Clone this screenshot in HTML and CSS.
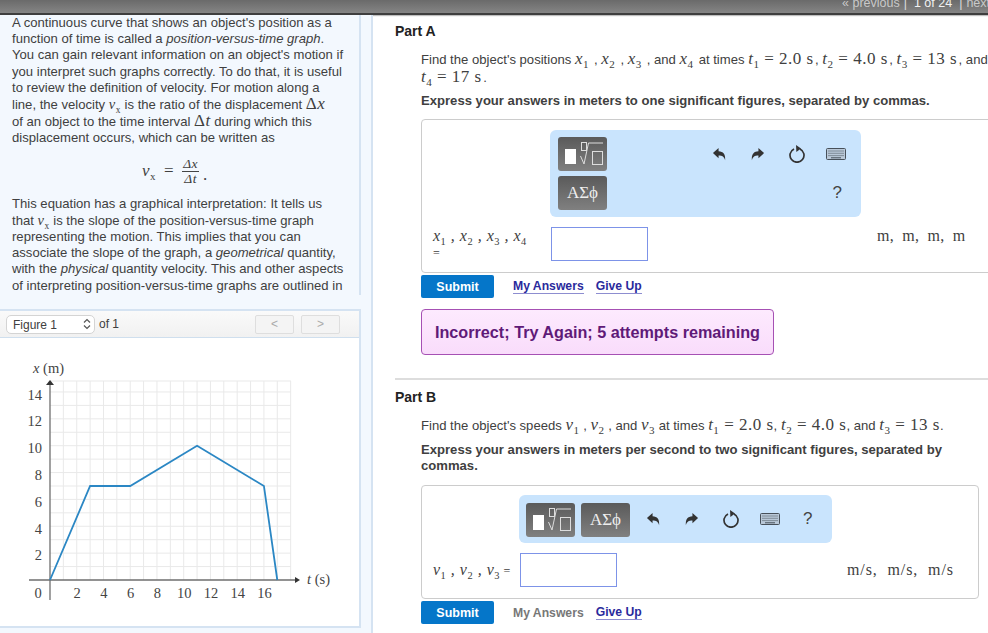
FILE: index.html
```html
<!DOCTYPE html>
<html lang="en">
<head>
    <meta charset="UTF-8">
    <meta name="viewport" content="width=device-width, initial-scale=1.0">
    <title>Position-versus-time graphs</title>
    <link rel="stylesheet" href="styles.css">
</head>
<body>
    <svg class="icon-defs" width="0" height="0">
        <symbol id="i-undo" viewBox="0 0 16 16"><path d="M1 6.500 7 1v3.400c5 .2 7.600 3.200 7 9.600-1-3.600-3-5-7-5V12z"/></symbol>
        <symbol id="i-redo" viewBox="0 0 16 16"><path d="M15 6.500 9 1v3.400c-5 .2-7.600 3.200-7 9.600 1-3.600 3-5 7-5V12z"/></symbol>
        <symbol id="i-reset" viewBox="0 0 18 18"><path d="M6 3.900a7 7 0 1 0 6 0" fill="none" stroke="currentColor" stroke-width="1.700"/><path d="M8 0l5 3.400L8.400 7z"/></symbol>
        <symbol id="i-keys" viewBox="0 0 20 12"><rect x=".5" y=".5" width="19" height="11" rx="1" fill="#b9c8d8" stroke="#47505a"/><path d="M2.500 3h15M2.500 5.300h15M2.500 7.600h15" stroke="#47505a" stroke-dasharray="1 1"/><path d="M5 9.800h10" stroke="#47505a"/></symbol>
        <symbol id="i-templates" viewBox="0 0 49 34"><rect x="7" y="12" width="11" height="15" fill="#fff"/><g fill="none" stroke="#ddd"><rect x="23.500" y="5.500" width="5" height="8"/><path d="M22.500 19l3.500 8 4.500-21h14.500"/><rect x="34.500" y="14.500" width="10" height="13"/></g></symbol>
        <symbol id="i-updown" viewBox="0 0 8 12"><path d="M1 4.500 4 1.500 7 4.500M1 7.500 4 10.500 7 7.500" fill="none" stroke="#555" stroke-width="1.200"/></symbol>
    </svg>

    <div class="topbar">
        <span>« previous</span><span class="sep">|</span><span class="count">1 of 24</span><span class="sep">|</span><span>next</span>
    </div>

    <div class="page">
        <aside class="sidebar">
            <div class="intro">
                <p>A continuous curve that shows an object's position as a<br>function of time is called a <em>position-versus-time graph</em>.<br>You can gain relevant information on an object's motion if<br>you interpret such graphs correctly. To do that, it is useful<br>to review the definition of velocity. For motion along a<br>line, the velocity <span class="m small">v<sub>x</sub></span> is the ratio of the displacement <span class="m big"><b>Δ</b>x</span><br>of an object to the time interval <span class="m big"><b>Δ</b>t</span> during which this<br>displacement occurs, which can be written as</p>
                <div class="equation">
                    <span class="m">v<sub>x</sub></span><span class="m eq">=</span>
                    <span class="frac"><span class="m">Δx</span><span class="m">Δt</span></span><span class="m dot">.</span>
                </div>
                <p>This equation has a graphical interpretation: It tells us<br>that <span class="m small">v<sub>x</sub></span> is the slope of the position-versus-time graph<br>representing the motion. This implies that you can<br>associate the slope of the graph, a <em>geometrical</em> quantity,<br>with the <em>physical</em> quantity velocity. This and other aspects<br>of interpreting position-versus-time graphs are outlined in</p>
            </div>

            <div class="figure">
                <div class="figure-bar">
                    <div class="figure-select">Figure 1<svg class="updown" width="8" height="12"><use href="#i-updown"/></svg></div>
                    <span>of 1</span>
                    <div class="pager"><span class="page-btn">&lt;</span><span class="page-btn">&gt;</span></div>
                </div>
                <svg class="graph" id="graph" width="358" height="288" viewBox="0 338 358 288"></svg>
            </div>
        </aside>

        <main class="content">
            <h3>Part A</h3>
            <div class="part">
                <p class="line-a">Find the object's positions <span class="m">x<sub>1</sub></span> , <span class="m">x<sub>2</sub></span> , <span class="m">x<sub>3</sub></span> , and <span class="m">x<sub>4</sub></span> at times <span class="m">t<sub>1</sub> <i>=</i> <i>2.0 s</i></span>, <span class="m">t<sub>2</sub> <i>=</i> <i>4.0 s</i></span>, <span class="m">t<sub>3</sub> <i>=</i> <i>13 s</i></span>, and<br><span class="m">t<sub>4</sub> <i>=</i> <i>17 s</i></span>.</p>
                <p class="ask">Express your answers in meters to one significant figures, separated by commas.</p>

                <div class="answer answer-a">
                    <div class="toolbar toolbar-a">
                        <div class="tool-row">
                            <button class="tool"><svg width="49" height="34"><use href="#i-templates"/></svg></button>
                            <span class="icons">
                                <svg class="ic" width="15" height="15"><use href="#i-undo"/></svg>
                                <svg class="ic" width="15" height="15"><use href="#i-redo"/></svg>
                                <svg class="ic" width="18" height="18"><use href="#i-reset"/></svg>
                                <svg class="ic keys" width="20" height="12"><use href="#i-keys"/></svg>
                            </span>
                        </div>
                        <div class="tool-row">
                            <button class="tool greek">ΑΣϕ</button>
                            <span class="help">?</span>
                        </div>
                    </div>
                    <div class="input-row">
                        <div class="var-label narrow"><span class="m">x<sub>1</sub> , x<sub>2</sub> , x<sub>3</sub> , x<sub>4</sub></span><br><i class="equals">=</i></div>
                        <div class="entry"></div>
                        <div class="units">m, &nbsp;m, &nbsp;m, &nbsp;m</div>
                    </div>
                </div>
                <div class="actions">
                    <button class="submit">Submit</button>
                    <a class="link first">My Answers</a>
                    <a class="link">Give Up</a>
                </div>

                <div class="feedback">Incorrect; Try Again; 5 attempts remaining</div>
            </div>

            <hr class="divider">

            <h3>Part B</h3>
            <div class="part">
                <p class="line-b">Find the object's speeds <span class="m">v<sub>1</sub></span> , <span class="m">v<sub>2</sub></span> , and <span class="m">v<sub>3</sub></span> at times <span class="m">t<sub>1</sub> <i>=</i> <i>2.0 s</i></span>, <span class="m">t<sub>2</sub> <i>=</i> <i>4.0 s</i></span>, and <span class="m">t<sub>3</sub> <i>=</i> <i>13 s</i></span>.</p>
                <p class="ask ask-b">Express your answers in meters per second to two significant figures, separated by commas.</p>

                <div class="answer answer-b">
                    <div class="toolbar toolbar-b">
                        <button class="tool"><svg width="49" height="34"><use href="#i-templates"/></svg></button>
                        <button class="tool greek">ΑΣϕ</button>
                        <span class="icons">
                            <svg class="ic" width="15" height="15"><use href="#i-undo"/></svg>
                            <svg class="ic" width="15" height="15"><use href="#i-redo"/></svg>
                            <svg class="ic" width="18" height="18"><use href="#i-reset"/></svg>
                            <svg class="ic keys" width="20" height="12"><use href="#i-keys"/></svg>
                            <span class="help">?</span>
                        </span>
                    </div>
                    <div class="input-row">
                        <div class="var-label"><span class="m">v<sub>1</sub> , v<sub>2</sub> , v<sub>3</sub></span> <i class="equals">=</i></div>
                        <div class="entry"></div>
                        <div class="units">m/s, &nbsp;m/s, &nbsp;m/s</div>
                    </div>
                </div>
                <div class="actions">
                    <button class="submit">Submit</button>
                    <a class="link first off">My Answers</a>
                    <a class="link">Give Up</a>
                </div>
            </div>
        </main>
    </div>

    <script>
        // position-versus-time graph
        const NS = 'http://www.w3.org/2000/svg';
        const graph = document.getElementById('graph');
        const X0 = 50, Y0 = 580, UX = 13.37, UY = 13.43;

        function add(tag, attrs, text) {
            const el = document.createElementNS(NS, tag);
            for (const k in attrs) el.setAttribute(k, attrs[k]);
            if (text) el.textContent = text;
            graph.appendChild(el);
            return el;
        }

        for (let t = 1; t <= 18; t++) {
            const x = X0 + t * UX;
            add('line', { x1: x, x2: x, y1: 381, y2: Y0, class: 'grid' });
        }
        for (let v = 1; v <= 14; v++) {
            const y = Y0 - v * UY;
            add('line', { x1: X0, x2: 291, y1: y, y2: y, class: 'grid' });
        }
        add('line', { x1: X0, x2: 291, y1: 381, y2: 381, class: 'grid' });

        add('line', { x1: 29, x2: 296, y1: Y0, y2: Y0, class: 'axis' });
        add('line', { x1: X0, x2: X0, y1: 385, y2: 600, class: 'axis' });
        add('path', { d: 'M46 385 50 380 54 385z', class: 'arrow' });
        add('path', { d: 'M295 577 300 580 295 583z', class: 'arrow' });

        const pts = [[0, 0], [3, 7], [6, 7], [11, 10], [16, 7], [17, 0]];
        add('polyline', {
            points: pts.map(p => (X0 + p[0] * UX) + ',' + (Y0 - p[1] * UY)).join(' '),
            class: 'curve'
        });

        [14, 12, 10, 8, 6, 4, 2].forEach((v, i) => {
            add('text', { x: 42, y: 399.5 + i * 26.8, class: 'num', 'text-anchor': 'end' }, String(v));
        });
        add('text', { x: 38, y: 598, class: 'num', 'text-anchor': 'middle' }, '0');
        [2, 4, 6, 8, 10, 12, 14, 16].forEach((v, i) => {
            add('text', { x: 77 + i * 26.8, y: 598, class: 'num', 'text-anchor': 'middle' }, String(v));
        });

        const xl = add('text', { x: 33, y: 373, class: 'num' });
        xl.innerHTML = '<tspan font-style="italic">x</tspan> (m)';
        const tl = add('text', { x: 307, y: 584, class: 'num' });
        tl.innerHTML = '<tspan font-style="italic">t</tspan> (s)';
    </script>
</body>
</html>
```

FILE: styles.css
```css
html, body {
    margin: 0;
    height: 100%;
    overflow: hidden;
}

body {
    font-family: 'Liberation Sans', Arial, sans-serif;
    font-size: 13.1px;
    color: #404040;
    background: #fff;
    display: flex;
    flex-direction: column;
}

.icon-defs {
    position: absolute;
}

p {
    margin: 0;
}

sub {
    font-size: 0.65em;
    line-height: 0;
    font-style: normal;
}

/* top strip */
.topbar {
    height: 13px;
    flex: none;
    display: flex;
    gap: 4px;
    padding-left: 842px;
    background: linear-gradient(#6a6a6a, #858585);
    border-bottom: 2px solid #3e3e3e;
    box-shadow: 0 1px 1px rgba(0, 0, 0, 0.25);
    color: #c9c9c9;
    font-size: 12.5px;
    line-height: 7px;
    white-space: nowrap;
    overflow: hidden;
}

.topbar .count {
    color: #f2f2f2;
    margin: 0 3px;
}

.topbar .sep {
    color: #ddd;
}

.page {
    flex: 1;
    display: flex;
    min-height: 0;
}

/* left column */
.sidebar {
    width: 371px;
    flex: none;
    background: #f3f8fe;
    border-right: 2px solid #d5e3f2;
    display: flex;
    flex-direction: column;
}

.intro {
    width: 337px;
    height: 280px;
    margin-bottom: 14px;
    padding: 0 10px 0 12px;
    border-right: 2px solid #d5e3f2;
    line-height: 16.2px;
    white-space: nowrap;
}

.equation {
    display: flex;
    align-items: center;
    height: 49px;
    padding-left: 130px;
}

.equation .eq {
    margin: 0 8px;
    font-style: normal;
}

.equation .dot {
    font-style: normal;
    margin: 8px 0 0 4px;
}

.frac {
    display: inline-flex;
    flex-direction: column;
    align-items: center;
}

.frac .m {
    font-size: 13.500px;
    line-height: 14px;
}

.frac .m:first-child {
    border-bottom: 1px solid #444;
    padding: 0 1px;
}

.m {
    font-family: 'Liberation Serif', 'Times New Roman', serif;
    font-style: italic;
    font-size: 17px;
    letter-spacing: 0.5px;
}

.m i {
    font-style: normal;
}

.m.small {
    font-size: 14.5px;
}

.m.big {
    font-size: 17px;
}

.m.big b {
    font-weight: normal;
    font-style: normal;
}

.figure {
    width: 359px;
    border-right: 2px solid #d5e3f2;
    border-bottom: 2px solid #d5e3f2;
    border-top: 2px solid #d5e3f2;
    background: #fff;
}

.figure-bar {
    height: 26px;
    display: flex;
    align-items: center;
    gap: 4px;
    padding-left: 6px;
    background: linear-gradient(#fafafa, #f1f1f1);
    border-bottom: 1px solid #cfdfee;
    font-size: 12px;
}

.figure-select {
    width: 81px;
    height: 17px;
    padding-left: 6px;
    background: #fff;
    border: 1px solid #d4d4d4;
    border-radius: 5px;
    line-height: 18px;
    position: relative;
}

.updown {
    position: absolute;
    right: 3px;
    top: 2px;
}

.pager {
    margin-left: auto;
    margin-right: 19px;
    display: flex;
    gap: 7px;
}

.page-btn {
    width: 37px;
    height: 17px;
    border: 1px solid #dedede;
    border-radius: 2px;
    text-align: center;
    color: #aaa;
    line-height: 16px;
    background: #f4f4f4;
}

.graph {
    display: block;
}

.grid {
    stroke: #e9e9e9;
    stroke-width: 1;
}

.axis {
    stroke: #6e6e6e;
    stroke-width: 1.300;
}

.arrow {
    fill: #333;
}

.curve {
    fill: none;
    stroke: #2b87c4;
    stroke-width: 1.800;
}

.num {
    font-family: 'Liberation Serif', serif;
    font-size: 14.500px;
    fill: #444;
}

/* right column */
.content {
    flex: 1;
    min-width: 0;
    padding: 8px 0 0 22px;
    overflow: hidden;
}

h3 {
    margin: 0;
    font-size: 14px;
    line-height: 16px;
    color: #222;
}

.part {
    padding-left: 26px;
}

.line-a {
    margin-top: 11px;
    line-height: 17px;
    white-space: nowrap;
}

.line-a .m {
    margin-right: 1.4px;
}

.line-b {
    margin-top: 11px;
    line-height: 17px;
    white-space: nowrap;
}

.ask {
    margin-top: 7px;
    font-weight: bold;
    line-height: 16px;
}

.ask-b {
    margin-top: 8px;
    width: 530px;
}

.answer {
    border: 1px solid #ccc;
    border-radius: 4px;
    box-sizing: border-box;
}

.answer-a {
    margin-top: 10px;
    width: 575px;
    height: 154px;
    padding: 10px 0 0 128px;
}

.answer-b {
    margin-top: 11px;
    width: 558px;
    height: 114px;
    padding: 9px 0 0 97px;
}

.toolbar {
    background: #c9e4fd;
    border-radius: 6px;
}

.toolbar-a {
    width: 311px;
    height: 87px;
    box-sizing: border-box;
    padding: 7px 8px;
}

.toolbar-b {
    width: 313px;
    height: 48px;
    box-sizing: border-box;
    padding: 8px 7px;
    display: flex;
    gap: 6px;
}

.tool-row {
    display: flex;
    align-items: center;
    height: 34px;
    margin-bottom: 5px;
}

.tool {
    width: 49px;
    height: 34px;
    padding: 0;
    border: none;
    border-radius: 3px;
    background: linear-gradient(#5a5a5a, #808080);
    display: block;
}

.greek {
    color: #eee;
    font-family: 'Liberation Serif', serif;
    font-size: 17px;
}

.icons {
    display: flex;
    align-items: center;
    color: #333;
    fill: #333;
    margin-left: auto;
    gap: 23px;
}

.icons .keys {
    margin-left: -3px;
}

.toolbar-a .icons {
    margin-right: 7px;
}

.toolbar-b .icons {
    margin-left: 10px;
}

.help {
    font-size: 17px;
    color: #444;
}

.tool-row .help {
    margin-left: auto;
    margin-right: 11px;
}

.input-row {
    display: flex;
    align-items: center;
}

.answer-a .input-row {
    margin-top: 10px;
    margin-left: -117px;
}

.answer-b .input-row {
    margin-top: 10px;
    margin-left: -86px;
}

.var-label {
    line-height: 16px;
    width: 87px;
    white-space: nowrap;
}

.narrow {
    width: 118px;
}

.var-label .m {
    font-size: 16px;
}

.equals {
    font-family: 'Liberation Serif', serif;
    font-style: normal;
    font-size: 12px;
}

.entry {
    width: 95px;
    height: 32px;
    border: 1px solid #7d93e8;
    background: #fff;
    flex: none;
}

.units {
    font-family: 'Liberation Serif', serif;
    font-size: 16px;
    white-space: nowrap;
}

.answer-a .units {
    margin-left: 229px;
    margin-bottom: 16px;
    letter-spacing: 0.2px;
}

.answer-b .units {
    margin-left: 230px;
    letter-spacing: 0.9px;
}

.actions {
    display: flex;
    align-items: center;
    margin-top: 2px;
}

.submit {
    width: 73px;
    height: 23px;
    padding: 0;
    border: none;
    border-radius: 2px;
    background: #0576c9;
    color: #fff;
    font: bold 12.500px 'Liberation Sans', sans-serif;
}

.link {
    margin-left: 12px;
    color: #2a2a9c;
    font-weight: bold;
    font-size: 12.200px;
    border-bottom: 1px solid #8d8dd0;
}

.link.first {
    margin-left: 19px;
}

.link.off {
    color: #777;
    border-bottom: none;
}

.feedback {
    margin-top: 11px;
    width: 353px;
    height: 46px;
    box-sizing: border-box;
    border: 1px solid #a650b4;
    border-radius: 4px;
    background: linear-gradient(#fdeafe, #f9dcfb);
    color: #5f1a78;
    font-size: 16.200px;
    font-weight: bold;
    line-height: 44px;
    text-align: center;
}

.divider {
    border: none;
    height: 2px;
    background: #ddd;
    margin: 23px 0 9px 0;
}
```
